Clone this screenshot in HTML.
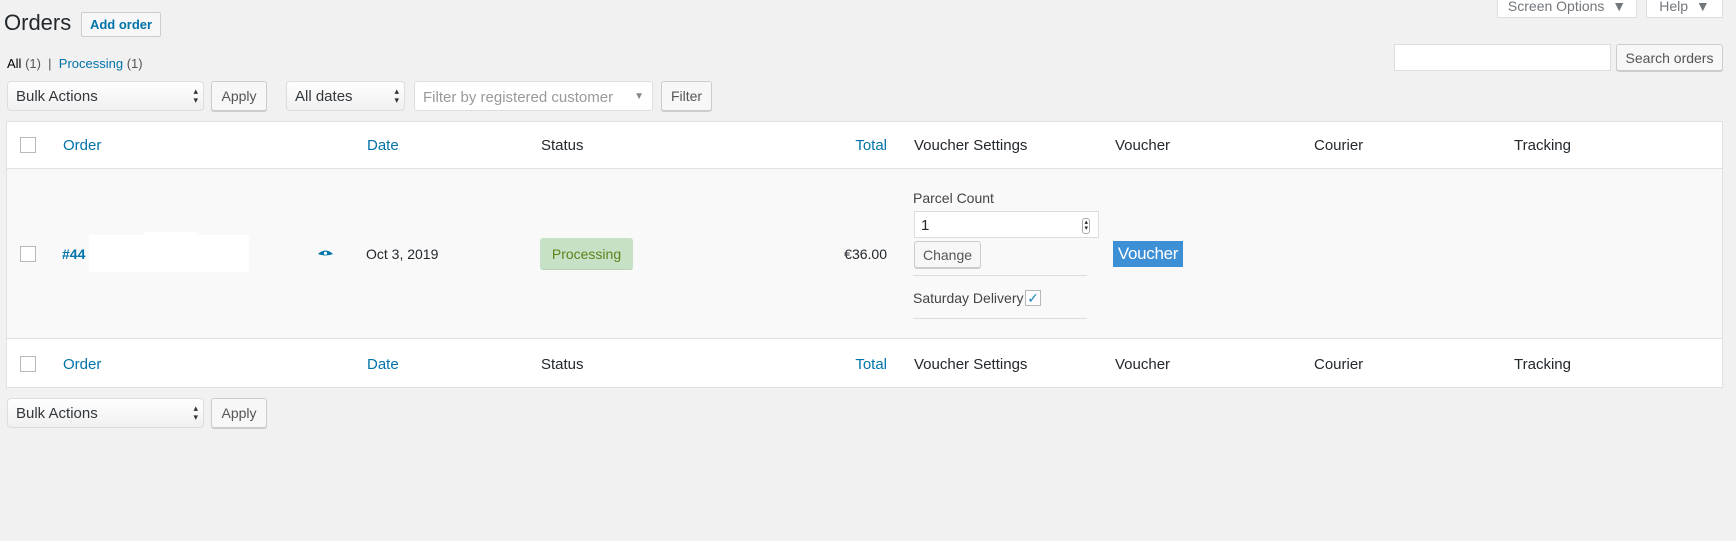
<!DOCTYPE html>
<html><head><meta charset="utf-8"><style>
*{box-sizing:border-box}
body{margin:0;width:1736px;height:541px;background:#f1f1f1;font-family:"Liberation Sans",sans-serif;color:#23282d;position:relative;overflow:hidden;font-size:14px}
.a{position:absolute}
.btn{position:absolute;border:1px solid #ccc;background:#f7f7f7;border-radius:3px;box-shadow:0 1px 0 #ccc;font-size:14px;color:#555;display:flex;align-items:center;justify-content:center}
.sel{position:absolute;border:1px solid #ddd;background:linear-gradient(#fff,#f0f0f0);border-radius:4px;font-size:15px;color:#32373c;display:flex;align-items:center;padding-left:8px}
.sel:after{content:"▴\A▾";white-space:pre;position:absolute;right:5px;top:5px;font-size:9px;line-height:9px;color:#333}
.link{color:#0073aa}
.cb{position:absolute;width:16px;height:16px;border:1px solid #b4b9be;background:#fff}
.th{position:absolute;font-size:15px}
</style></head><body>
<div class="a" style="left:4px;top:10px;font-size:22px;font-weight:400">Orders</div>
<div class="a" style="left:81px;top:12px;width:80px;height:25px;border:1px solid #ccc;background:#f7f7f7;border-radius:2px;color:#0073aa;font-size:13px;font-weight:bold;display:flex;align-items:center;justify-content:center">Add order</div>
<div class="a" style="left:1497px;top:-6px;width:140px;height:24px;background:#fff;border:1px solid #ddd;font-size:14px;color:#72777c;display:flex;align-items:center;justify-content:center">Screen Options &nbsp;▼</div>
<div class="a" style="left:1646px;top:-6px;width:77px;height:24px;background:#fff;border:1px solid #ddd;font-size:14px;color:#72777c;display:flex;align-items:center;justify-content:center">Help &nbsp;▼</div>
<div class="a" style="left:1394px;top:44px;width:217px;height:27px;background:#fff;border:1px solid #ddd"></div>
<div class="btn" style="left:1616px;top:44px;width:107px;height:27px">Search orders</div>
<div class="a" style="left:7px;top:56px;font-size:13px;color:#555"><b style="color:#000;font-weight:normal">All</b> (1) &nbsp;| &nbsp;<span class="link">Processing</span> (1)</div>
<div class="sel" style="left:7px;top:81px;width:197px;height:30px">Bulk Actions</div>
<div class="btn" style="left:211px;top:81px;width:56px;height:30px">Apply</div>
<div class="sel" style="left:286px;top:81px;width:119px;height:30px">All dates</div>
<div class="a" style="left:414px;top:81px;width:239px;height:30px;background:#fff;border:1px solid #ddd;border-radius:3px;color:#999;font-size:15px;padding:7px 8px">Filter by registered customer<span style="position:absolute;right:8px;top:9px;font-size:10px;color:#888">▼</span></div>
<div class="btn" style="left:661px;top:81px;width:51px;height:30px">Filter</div>

<div class="a" style="left:6px;top:121px;width:1717px;height:267px;background:#fff;border:1px solid #e1e1e1"></div>
<div class="a" style="left:7px;top:168px;width:1715px;height:171px;background:#f9f9f9;border-top:1px solid #e1e1e1;border-bottom:1px solid #e1e1e1"></div>

<div class="cb" style="left:20px;top:137px"></div>
<div class="th link" style="left:63px;top:137px">Order</div>
<div class="th link" style="left:367px;top:137px">Date</div>
<div class="th" style="left:541px;top:137px">Status</div>
<div class="th link" style="left:820px;top:137px;width:67px;text-align:right">Total</div>
<div class="th" style="left:914px;top:137px">Voucher Settings</div>
<div class="th" style="left:1115px;top:137px">Voucher</div>
<div class="th" style="left:1314px;top:137px">Courier</div>
<div class="th" style="left:1514px;top:137px">Tracking</div>

<div class="cb" style="left:20px;top:246px"></div>
<div class="a link" style="left:62px;top:246px;font-weight:bold;font-size:14px;color:#0073aa">#44</div>
<div class="a" style="left:89px;top:235px;width:160px;height:37px;background:#fff"></div>
<div class="a" style="left:144px;top:232px;width:53px;height:5px;background:#fff"></div>
<svg class="a" style="left:318px;top:249px" width="15" height="10" viewBox="0 0 15 10"><path d="M0 5Q7.5-2 15 5Q7.5 8 0 5Z" fill="#0073aa"/><circle cx="7.5" cy="4.2" r="1.6" fill="#fff"/></svg>
<div class="a" style="left:366px;top:246px;font-size:14px">Oct 3, 2019</div>
<div class="a" style="left:540px;top:238px;width:93px;height:32px;background:#c6e1c6;border-radius:3px;color:#5b841b;font-size:14px;display:flex;align-items:center;justify-content:center;border-bottom:1px solid #b8d3b8">Processing</div>
<div class="a" style="left:820px;top:246px;width:67px;text-align:right;font-size:14px">€36.00</div>
<div class="a" style="left:913px;top:190px;font-size:14px;color:#444">Parcel Count</div>
<div class="a" style="left:914px;top:211px;width:185px;height:27px;background:#fff;border:1px solid #ddd;padding:5px 6px;font-size:15px">1<span style="position:absolute;right:8px;top:6px;font-size:7px;line-height:6px;border:1px solid #aaa;border-radius:3px;padding:1px">▴<br>▾</span></div>
<div class="btn" style="left:914px;top:241px;width:67px;height:27px">Change</div>
<div class="a" style="left:913px;top:275px;width:174px;height:1px;background:#ddd"></div>
<div class="a" style="left:913px;top:290px;font-size:14px;color:#444">Saturday Delivery</div>
<div class="a" style="left:1025px;top:290px;width:16px;height:16px;border:1px solid #b4b9be;background:#fff;color:#1e8cbe;font-size:14px;line-height:14px;text-align:center">✓</div>
<div class="a" style="left:913px;top:318px;width:174px;height:1px;background:#ddd"></div>
<div class="a" style="left:1113px;top:241px;width:70px;height:26px;background:#3d8fd6;color:#fff;font-size:17px;display:flex;align-items:center;justify-content:center;letter-spacing:-0.3px">Voucher</div>

<div class="cb" style="left:20px;top:356px"></div>
<div class="th link" style="left:63px;top:356px">Order</div>
<div class="th link" style="left:367px;top:356px">Date</div>
<div class="th" style="left:541px;top:356px">Status</div>
<div class="th link" style="left:820px;top:356px;width:67px;text-align:right">Total</div>
<div class="th" style="left:914px;top:356px">Voucher Settings</div>
<div class="th" style="left:1115px;top:356px">Voucher</div>
<div class="th" style="left:1314px;top:356px">Courier</div>
<div class="th" style="left:1514px;top:356px">Tracking</div>

<div class="sel" style="left:7px;top:398px;width:197px;height:30px">Bulk Actions</div>
<div class="btn" style="left:211px;top:398px;width:56px;height:30px">Apply</div>
</body></html>
